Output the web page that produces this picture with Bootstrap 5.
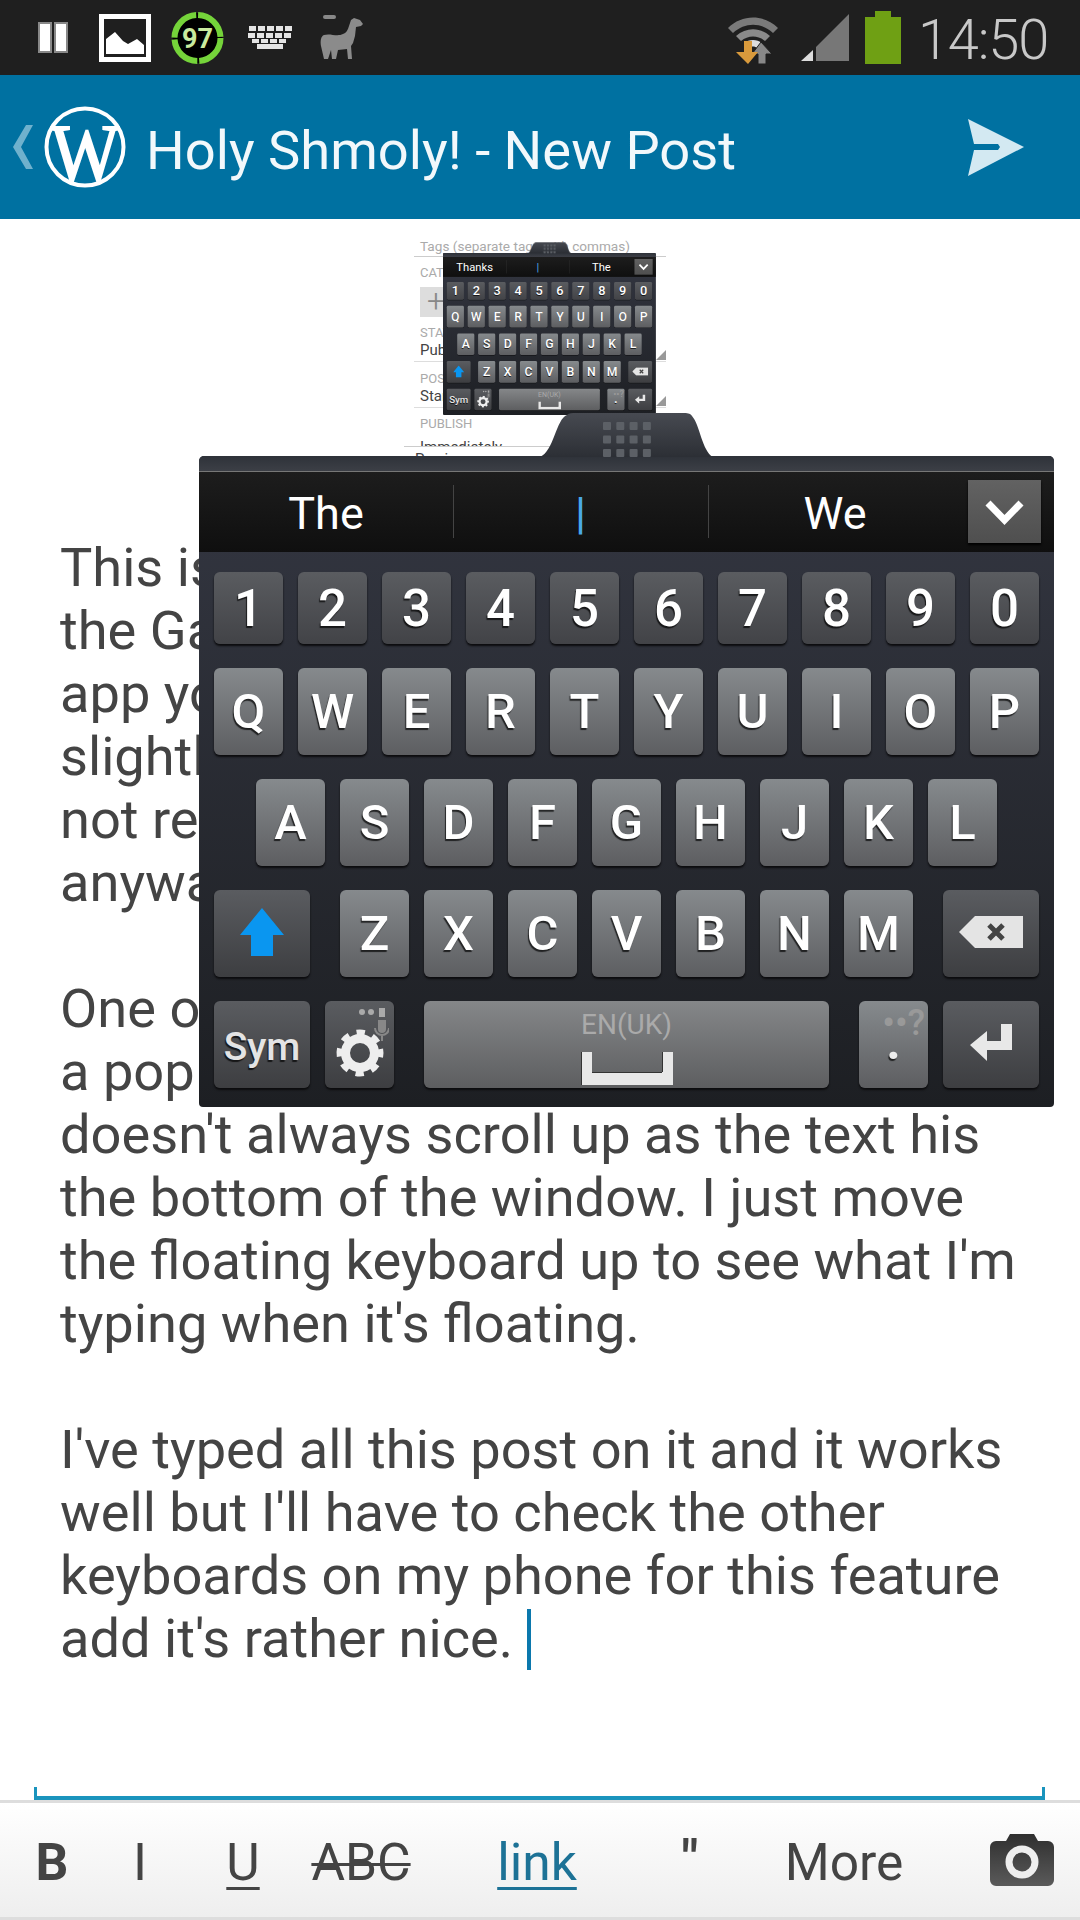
<!DOCTYPE html>
<html lang="en">
<head>
  <meta charset="UTF-8" />
  <title>Holy Shmoly! - New Post</title>
  <meta name="viewport" content="width=device-width, initial-scale=1.0" />
  <link href="https://cdn.jsdelivr.net/npm/bootstrap@5.3.0/dist/css/bootstrap.min.css" rel="stylesheet">
  <style>
    body { background: #fff; font-family: Roboto, "Liberation Sans", sans-serif; color: #444; }
    .phone { width: 1080px; height: 1920px; overflow: hidden; }

    /* status bar */
    .statusbar { height: 75px; background: #1f1f1f; padding: 0 28px 0 37px; }
    .statusbar svg { display: block; flex: none; }
    .st-pic { margin-left: 30px; }
    .st-bat { margin-left: 20px; }
    .st-kbd { margin-left: 24px; }
    .st-llama { margin-left: 28px; }
    .st-wifi { margin-left: auto; }
    .st-sig { margin-left: 22px; }
    .st-batt { margin-left: 16px; }
    .clock { margin: 5px 0 0 17px; width: 134px; font-size: 56px; font-weight: 300; letter-spacing: -1.2px; color: #c8c8c8; line-height: 70px; white-space: nowrap; }

    /* action bar */
    .actionbar { height: 144px; background: #0071a1; color: #f2f8fb; padding-left: 13px; }
    .actionbar svg { flex: none; display: block; }
    .bar-logo { margin-left: 11px; }
    .bar-title { margin: 8px 0 0 20px; font-size: 54.3px; line-height: 1; white-space: nowrap; }
    .bar-send { margin-left: auto; margin-right: 56px; }

    /* editor */
    .editor { position: relative; }
    .shot { margin: 21px 0 80px 404px; width: 266px; height: 216px; flex: none; overflow: hidden; position: relative; color: #aaa; font-size: 13px; line-height: 1; }
    .shot-tags { margin: 0 4px 0 10px; padding-left: 6px; height: 17px; border-bottom: 1px solid #ccc; font-size: 13.6px; white-space: nowrap; }
    .shot-label { padding-left: 16px; height: 14px; white-space: nowrap; }
    .shot-gap-a { margin-top: 9px; }
    .shot-gap-b { margin-top: 10px; }
    .shot-plus { margin: 7px 0 9px 16px; width: 60px; height: 30px; background: #ddd; color: #888; font-size: 32px; line-height: 28px; padding-left: 7px; font-weight: 300; }
    .shot-value { position: relative; margin: 1px 4px 0 10px; padding-left: 6px; border-bottom: 1px solid #ddd; color: #444; font-size: 15px; line-height: 19px; height: 21px; white-space: nowrap; }
    .shot-value::after { content: ""; position: absolute; right: 0; bottom: 1px; border: 5px solid transparent; border-right-color: #999; border-bottom-color: #999; }
    .shot-when { margin-top: 9px; padding-left: 16px; color: #444; font-size: 15px; height: 7px; overflow: hidden; border-bottom: 1px solid #ccc; white-space: nowrap; }
    .shot-more { padding-left: 11px; margin-top: 5px; color: #444; font-size: 15px; white-space: nowrap; }
    .post { padding-left: 60px; font-size: 54.2px; line-height: 63px; white-space: nowrap; color: #444; }
    .post p { margin: 0 0 63px; }
    .caret-bar { display: inline-block; width: 4px; height: 61px; background: #0b78ad; vertical-align: -13px; margin-left: 14px; }
    .field-end { margin: auto 35px 0 34px; height: 13px; border: solid #1a94bd; border-width: 0 3px 4px; }

    /* format bar */
    .formatbar { height: 120px; flex: none; background: linear-gradient(#fff, #eee); border-top: 3px solid #ddd; border-bottom: 3px solid #ddd; display: grid; grid-template-columns: 104px 72px 134px 102px 250px 56px 252px 104px; align-items: center; text-align: center; font-size: 51.5px; line-height: 1; color: #444; padding-top: 5px; }
    .fmt-b { font-weight: 700; }
    .fmt-u { text-decoration: underline; text-decoration-thickness: 3px; text-underline-offset: 7px; }
    .fmt-s { text-decoration: line-through; text-decoration-thickness: 3px; }
    .fmt-l { color: #1d7296; text-decoration: underline; text-decoration-thickness: 3px; text-underline-offset: 7px; }
    .fmt-q { font-weight: 700; margin-top: -6px; }
    .formatbar svg { display: block; margin: -5px auto 0; }

    /* floating keyboard */
    .kb { position: absolute; width: 855px; height: 651px; background: linear-gradient(#343742, #1d1f23); border-radius: 5px 5px 4px 4px; color: #fff; }
    .kb-big { left: 199px; top: 237px; }
    .kb-mini { left: 39px; top: 13px; transform: scale(.249); transform-origin: top left; }
    .kb-grip { position: absolute; left: 341px; top: -43px; display: block; }
    .kb-head { height: 16px; background: linear-gradient(#2e3239, #3c3f46); border-bottom: 1px solid #777; border-radius: 5px 5px 0 0; }
    .kb-cands { height: 80px; background: linear-gradient(#1d1d1d, #0f0f0f); position: relative; font-size: 45px; line-height: 84px; text-align: center; }
    .kb-cand { height: 80px; }
    .kb-cand-a { width: 254px; }
    .kb-cand-b { width: 255px; }
    .kb-cand-c { width: 254px; }
    .kb-cand-b, .kb-cand-c { position: relative; }
    .kb-cand-b::before, .kb-cand-c::before { content: ""; position: absolute; left: 0; top: 13px; height: 53px; width: 1px; background: #444; }
    .kb-pick { color: #4aa8e8; }
    .kb-drop { position: absolute; left: 769px; top: 8px; width: 73px; height: 63px; background: linear-gradient(#626262, #4f4f4f); box-shadow: 0 2px 2px #000; }
    .kb-drop svg { display: block; }
    .kb-rows { padding: 20px 15px 0; }
    .kb-row { display: flex; gap: 15px; height: 87px; margin-bottom: 24px; }
    .kb-row-num { height: 72px; }
    .kb-row-mid { justify-content: center; }
    .kb-row-low { justify-content: space-between; }
    .kb-group { display: flex; gap: 15px; }
    .kkey { width: 69px; flex: none; border-radius: 6px; background: linear-gradient(#868a8d, #5d5e61); box-shadow: 0 2px 2px #0c0c0e; display: flex; align-items: center; justify-content: center; font-size: 49px; font-weight: 500; line-height: 1; color: #fff; text-shadow: -1px 2px 1px rgba(0,0,0,.7); position: relative; }
    .kkey-num { background: linear-gradient(#5a5c60, #424347); font-size: 51px; }
    .kkey-fn { background: linear-gradient(#5a5c60, #3d3e41); }
    .kkey-wide { width: 96px; }
    .kkey-space { width: 405px; margin: 0 15px; background: linear-gradient(#858789, #5d5e60); }
    .kkey-sym { font-size: 39px; color: #e4e4e4; padding-top: 5px; }
    .kkey-lang { position: absolute; top: 10px; left: 0; right: 0; text-align: center; font-size: 28px; font-weight: 400; color: #aaa; text-shadow: none; }
    .kkey-dots { position: absolute; top: 4px; right: 3px; font-size: 36px; color: #999; text-shadow: none; line-height: 1; }
    .kkey-dot { margin-top: -6px; font-size: 50px; color: #eee; font-weight: 700; }
    .kkey svg { display: block; }
    .kkey-corner { position: absolute; top: 3px; right: 5px; }
  </style>
</head>
<body>
<div class="phone d-flex flex-column">

  <div class="statusbar d-flex align-items-center">
    <svg width="32" height="31" viewBox="0 0 32 31"><rect x="2" y="1" width="12" height="29" fill="#fff" stroke="#888" stroke-width="2"/><rect x="18" y="1" width="12" height="29" fill="#fff" stroke="#888" stroke-width="2"/></svg>
    <svg class="st-pic" width="52" height="48" viewBox="0 0 52 48"><rect x="2.5" y="2.5" width="47" height="43" fill="#1f1f1f" stroke="#fff" stroke-width="5"/><path d="M7 40V25L16 18l8 9 5 3 9-5 7 6v9z" fill="#fff"/></svg>
    <svg class="st-bat" width="53" height="52" viewBox="0 0 53 52"><circle cx="26.500" cy="26" r="25" fill="#000"/><circle cx="26.500" cy="26" r="23" fill="none" stroke="#75d43a" stroke-width="6" stroke-dasharray="34.100 2"/><text x="26.500" y="36" text-anchor="middle" font-family="Roboto, sans-serif" font-size="28" font-weight="700" fill="#c9ea9e" textLength="31" lengthAdjust="spacingAndGlyphs">97</text></svg>
    <svg class="st-kbd" width="44" height="23" viewBox="0 0 44 23" fill="#e4e4e4"><rect x="1" y="0" width="7" height="5"/><rect x="10" y="0" width="7" height="5"/><rect x="19" y="0" width="7" height="5"/><rect x="28" y="0" width="7" height="5"/><rect x="37" y="0" width="7" height="5"/><rect x="0" y="7" width="7" height="5"/><rect x="9" y="7" width="7" height="5"/><rect x="18" y="7" width="7" height="5"/><rect x="27" y="7" width="7" height="5"/><rect x="36" y="7" width="7" height="5"/><rect x="4" y="13" width="7" height="4"/><rect x="13" y="13" width="7" height="4"/><rect x="22" y="13" width="7" height="4"/><rect x="31" y="13" width="7" height="4"/><rect x="9" y="18" width="26" height="5"/></svg>
    <svg class="st-llama" width="44" height="45" viewBox="0 0 44 45"><rect x="3" y="0" width="13" height="4" rx="2" fill="#888"/><path d="M40 5l3 4-2 2-5 1-1 9-2 7-2 3 1 13h-4l-1-10-9 1-2 9H12l-1-9-3 9H4L1 31c-1-5 0-10 3-11 6-2 13 2 19-1 3-1 5-4 6-8l2-6 3-2z" fill="#8b8b8b"/></svg>
    <svg class="st-wifi" width="52" height="53" viewBox="0 0 52 53"><path d="M1 17C15 3 37 3 51 17l-5 5C34 11 18 11 6 22z" fill="#7a7a7a"/><path d="M9 25c10-9 24-9 34 0l-5 5c-7-6-17-6-24 0z" fill="#8a8a8a"/><path d="M17 32c5-4 13-4 18 0l-5 5c-2-2-6-2-8 0z" fill="#ddd"/><path d="M34 31l11 12h-6v10h-8V43h-6z" fill="#888" stroke="#1f1f1f" stroke-width="1"/><path d="M17 33h8v11h6L21 56 9 44h8z" fill="#d99a3c" transform="translate(0 -3)"/></svg>
    <svg class="st-sig" width="48" height="47" viewBox="0 0 48 47"><path d="M48 0v47H15V33z" fill="#777"/><path d="M12 36v11H0z" fill="#ddd"/></svg>
    <svg class="st-batt" width="36" height="53" viewBox="0 0 36 53"><path d="M10 0h16v6h10v47H0V6h10z" fill="#6fa014"/></svg>
    <div class="clock">14:50</div>
  </div>

  <div class="actionbar d-flex align-items-center">
    <svg width="20" height="44" viewBox="0 0 20 44"><path d="M13 0h7L8 22l12 22h-7L0 22z" fill="#6fb1cd"/></svg>
    <svg class="bar-logo" width="82" height="82" viewBox="0 0 82 82"><circle cx="41" cy="41" r="38.500" fill="none" stroke="#fff" stroke-width="4"/><text x="41" y="75" text-anchor="middle" font-family="'Liberation Serif', serif" font-size="82" fill="#fff" stroke="#fff" stroke-width="2" textLength="68" lengthAdjust="spacingAndGlyphs">W</text></svg>
    <div class="bar-title">Holy Shmoly! - New Post</div>
    <svg class="bar-send" width="57" height="57" viewBox="0 0 57 57"><path d="M1 0l56 28L1 57l6-26h24l2-3-2-3H7z" fill="#d3e9f2"/></svg>
  </div>

  <div class="editor flex-grow-1 d-flex flex-column">
    <div class="shot">
      <div class="shot-tags">Tags (separate tags with commas)</div>
      <div class="shot-label shot-gap-a">CATEGORIES</div>
      <div class="shot-plus">+</div>
      <div class="shot-label">STATUS</div>
      <div class="shot-value">Published</div>
      <div class="shot-label shot-gap-b">POST FORMAT</div>
      <div class="shot-value">Standard</div>
      <div class="shot-label shot-gap-a">PUBLISH</div>
      <div class="shot-when">Immediately</div>
      <div class="shot-more">Preview</div>
      <div class="kb kb-mini" id="kbMini"></div>
    </div>

    <div class="post">
      <p>This is a<br>the Gal<br>app yo<br>slightly<br>not rea<br>anyway</p>
      <p>One of<br>a pop<br>doesn't always scroll up as the text his<br>the bottom of the window. I just move<br>the floating keyboard up to see what I'm<br>typing when it's floating.</p>
      <p>I've typed all this post on it and it works<br>well but I'll have to check the other<br>keyboards on my phone for this feature<br>add it's rather nice.<span class="caret-bar"></span></p>
    </div>

    <div class="field-end"></div>
    <div class="kb kb-big" id="kbBig"></div>
  </div>

  <div class="formatbar">
    <div class="fmt-b">B</div>
    <div>I</div>
    <div><span class="fmt-u">U</span></div>
    <div><span class="fmt-s">ABC</span></div>
    <div><span class="fmt-l">link</span></div>
    <div class="fmt-q">"</div>
    <div>More</div>
    <div>
      <svg width="64" height="52" viewBox="0 0 64 52"><defs><linearGradient id="camFill" x1="0" y1="0" x2="0" y2="1"><stop offset="0" stop-color="#2f2f2f"/><stop offset="1" stop-color="#5a5a5a"/></linearGradient></defs><path d="M20 0h24l4 7h10a6 6 0 0 1 6 6v33a6 6 0 0 1-6 6H6a6 6 0 0 1-6-6V13a6 6 0 0 1 6-6h10z" fill="url(#camFill)"/><circle cx="32" cy="28" r="13" fill="none" stroke="#eee" stroke-width="7"/></svg>
    </div>
  </div>
</div>

<script src="https://cdn.jsdelivr.net/npm/bootstrap@5.3.0/dist/js/bootstrap.bundle.min.js"></script>
<script>
  const letterKeys = (chars, cls = "") =>
    chars.split("").map(c => `<div class="kkey ${cls}">${c}</div>`).join("");

  const gripDots = () => {
    let dots = "";
    for (let r = 0; r < 3; r++) {
      for (let c = 0; c < 4; c++) {
        dots += `<rect x="${63 + c * 13.300}" y="${9 + r * 13.500}" width="8" height="8" rx="1" fill="#5c6066"/>`;
      }
    }
    return dots;
  };

  function buildKeyboard(el, words, id) {
    el.innerHTML = `
      <svg class="kb-grip" width="173" height="44" viewBox="0 0 173 44">
        <defs><linearGradient id="grip${id}" x1="0" y1="0" x2="0" y2="1"><stop offset="0" stop-color="#474a51"/><stop offset="1" stop-color="#2c2f35"/></linearGradient></defs>
        <path d="M0 44C14 38 16 6 27 2 29 0 32 0 36 0H143C147 0 150 0 152 3 160 12 162 38 173 44Z" fill="url(#grip${id})"/>
        ${gripDots()}
      </svg>
      <div class="kb-head"></div>
      <div class="kb-cands d-flex">
        <div class="kb-cand kb-cand-a">${words[0]}</div>
        <div class="kb-cand kb-cand-b kb-pick">|</div>
        <div class="kb-cand kb-cand-c">${words[1]}</div>
        <div class="kb-drop"><svg width="73" height="63" viewBox="0 0 73 63"><path d="M20 23l16.500 17L53 23" fill="none" stroke="#fff" stroke-width="7"/></svg></div>
      </div>
      <div class="kb-rows">
        <div class="kb-row kb-row-num">${letterKeys("1234567890", "kkey-num")}</div>
        <div class="kb-row">${letterKeys("QWERTYUIOP")}</div>
        <div class="kb-row kb-row-mid">${letterKeys("ASDFGHJKL")}</div>
        <div class="kb-row kb-row-low">
          <div class="kkey kkey-fn kkey-wide"><svg class="mb-1" width="44" height="48" viewBox="0 0 44 48"><path d="M22 0l22 27H33v21H11V27H0z" fill="#0a96f0"/></svg></div>
          <div class="kb-group">${letterKeys("ZXCVBNM")}</div>
          <div class="kkey kkey-fn kkey-wide"><svg class="mb-1" width="64" height="34" viewBox="0 0 64 34"><path d="M16 1h48v32H16L0 17z" fill="#e4e4e4"/><path d="M30 10l14 14M44 10L30 24" stroke="#444" stroke-width="5"/></svg></div>
        </div>
        <div class="kb-row">
          <div class="kkey kkey-fn kkey-wide kkey-sym">Sym</div>
          <div class="kkey kkey-fn">
            <svg class="mt-3" width="48" height="48" viewBox="0 0 48 48"><circle cx="24" cy="24" r="19" fill="none" stroke="#eee" stroke-width="9" stroke-dasharray="7.500 7.420" transform="rotate(-11 24 24)"/><circle cx="24" cy="24" r="14.500" fill="none" stroke="#eee" stroke-width="9"/></svg>
            <svg class="kkey-corner" width="30" height="38" viewBox="0 0 30 38"><circle cx="3" cy="8" r="3" fill="#aaa"/><circle cx="12" cy="8" r="3" fill="#aaa"/><rect x="20" y="4" width="6" height="9" fill="#aaa"/><path d="M19 16h8v9a4 4 0 0 1-8 0z" fill="#888"/><path d="M16 24a7 7 0 0 0 14 0M23 31v6" fill="none" stroke="#888" stroke-width="2"/></svg>
          </div>
          <div class="kkey kkey-space">
            <div class="kkey-lang">EN(UK)</div>
            <svg class="mt-5" width="92" height="33" viewBox="0 0 92 33"><path d="M0 0h11v21h70V0h11v33H0z" fill="#e8e8e8"/><path d="M0 0h1v33H0zM81 20h1V0h-1z" fill="#333"/><path d="M11 20h70v1H11z" fill="#333"/></svg>
          </div>
          <div class="kkey"><div class="kkey-dots">••?</div><div class="kkey-dot">.</div></div>
          <div class="kkey kkey-fn kkey-wide"><svg class="mb-1" width="42" height="37" viewBox="0 0 42 37"><path d="M31 0h11v26H17v11L0 21 17 7v10h14z" fill="#e8e8e8"/></svg></div>
        </div>
      </div>`;
  }

  buildKeyboard(document.getElementById("kbBig"), ["The", "We"], "A");
  buildKeyboard(document.getElementById("kbMini"), ["Thanks", "The"], "B");
</script>
</body>
</html>
